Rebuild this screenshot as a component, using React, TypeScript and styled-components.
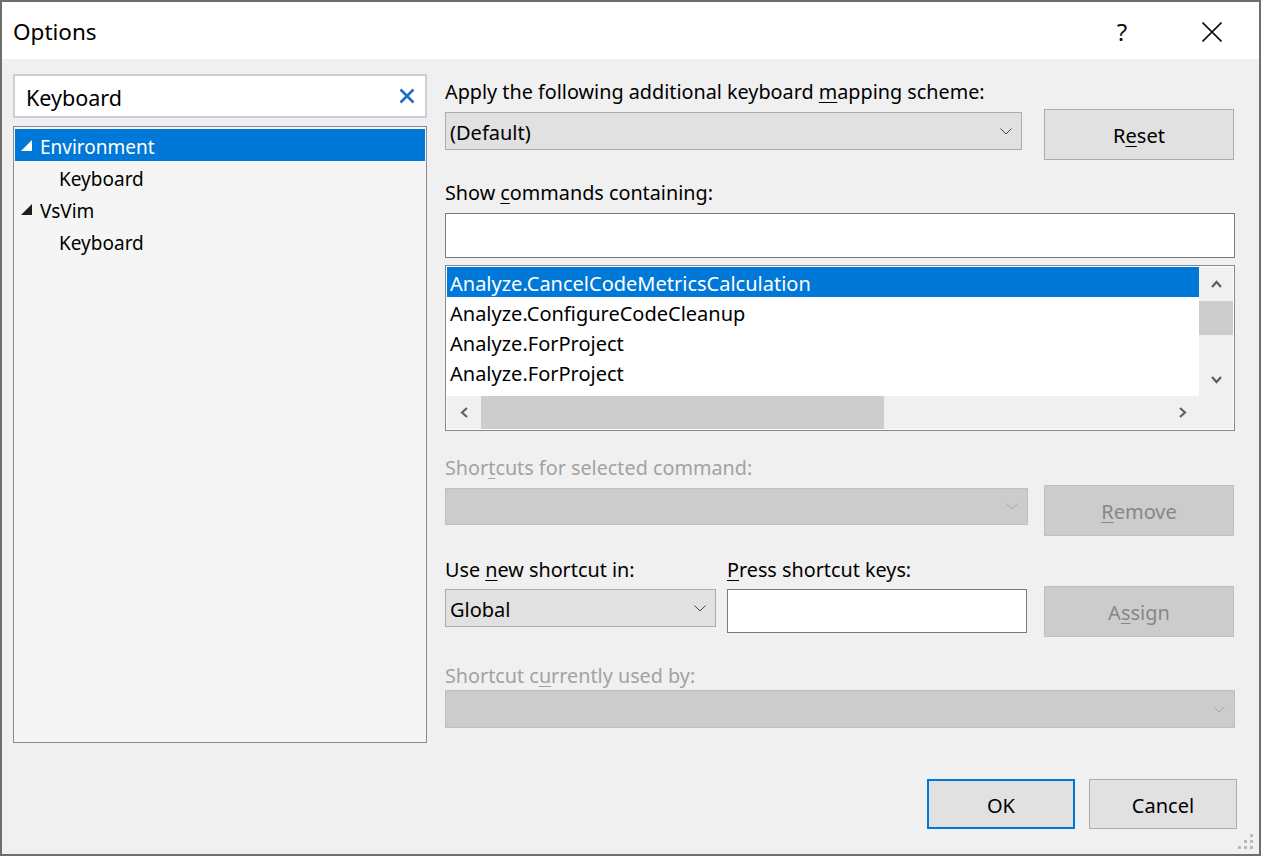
import React from "react";
import styled, { createGlobalStyle } from "styled-components";

const FONT = `"Noto Sans", "Open Sans", "DejaVu Sans", sans-serif`;

const Global = createGlobalStyle`
  html, body { margin: 0; padding: 0; background: #ffffff; }
  body { font-family: ${FONT}; }
  * { box-sizing: border-box; }
`;

const Window = styled.div`
  position: relative;
  width: 1261px;
  height: 856px;
  border: 2px solid #6e6e6e;
  background: #f0f0f0;
  display: flex;
  flex-direction: column;
  font-family: ${FONT};
  color: #000;
`;

const TitleBar = styled.div`
  height: 57px;
  flex: none;
  background: #ffffff;
  display: flex;
  align-items: center;
  padding: 2px 12px 0 11px;
`;

const Title = styled.div`
  font-size: 22.5px;
  line-height: 30px;
`;

const TitleButtons = styled.div`
  margin-left: auto;
  display: flex;
  gap: 20px;
  align-items: center;
`;

const TitleButton = styled.div`
  width: 70px;
  height: 40px;
  display: flex;
  align-items: center;
  justify-content: center;
  font-size: 24px;
  color: #111;
`;

const Content = styled.div`
  flex: 1;
  display: flex;
  flex-direction: column;
  padding: 15px 24px 25px 11px;
`;

const Main = styled.div`
  flex: 1;
  display: flex;
  gap: 18px;
  min-height: 0;
`;

const LeftCol = styled.div`
  width: 414px;
  flex: none;
  display: flex;
  flex-direction: column;
  gap: 8px;
`;

const SearchBox = styled.div`
  height: 44px;
  border: 2px solid #cdd0db;
  background: #ffffff;
  display: flex;
  align-items: center;
  padding: 0 10px 0 11px;
  font-size: 21.5px;
`;

const SearchText = styled.span`
  flex: 1;
  padding-top: 2px;
`;

const Tree = styled.div`
  flex: 1;
  border: 1px solid #8b8a9c;
  background: #f5f5f5;
  padding: 2px 1px;
`;

const TreeRow = styled.div<{ $level: number; $selected?: boolean }>`
  height: 32px;
  display: flex;
  align-items: center;
  font-size: 19px;
  padding-left: ${(p) => (p.$level === 0 ? 6 : 44)}px;
  gap: 8px;
  background: ${(p) => (p.$selected ? "#0078d7" : "transparent")};
  color: ${(p) => (p.$selected ? "#ffffff" : "#000000")};
`;

const TreeText = styled.span`
  padding-top: 3px;
`;

const RightCol = styled.div`
  flex: 1;
  display: flex;
  flex-direction: column;
`;

const Label = styled.div<{ $mt: number; $disabled?: boolean }>`
  margin-top: ${(p) => p.$mt}px;
  height: 26px;
  line-height: 26px;
  padding-top: 2px;
  font-size: 19.8px;
  white-space: nowrap;
  color: ${(p) => (p.$disabled ? "#a2a2a2" : "#000000")};
`;

const Key = styled.span`
  text-decoration: underline;
  text-decoration-thickness: 1px;
  text-underline-offset: 3px;
`;

const ControlRow = styled.div<{ $mt: number }>`
  margin-top: ${(p) => p.$mt}px;
  padding-right: 1px;
  display: flex;
  justify-content: space-between;
  align-items: flex-start;
`;

const Dropdown = styled.div<{ $w?: number; $h: number; $disabled?: boolean; $mt?: number }>`
  width: ${(p) => (p.$w ? `${p.$w}px` : "100%")};
  height: ${(p) => p.$h}px;
  margin-top: ${(p) => p.$mt ?? 0}px;
  background: ${(p) => (p.$disabled ? "#cccccc" : "#e1e1e1")};
  border: 1px solid ${(p) => (p.$disabled ? "#bfbfbf" : "#adadad")};
  display: flex;
  align-items: center;
  padding: 0 9px 0 4px;
  font-size: 20px;
  color: ${(p) => (p.$disabled ? "#8a8a8a" : "#000000")};
`;

const DropText = styled.span`
  flex: 1;
  padding-top: 2px;
`;

const Button = styled.div<{ $w: number; $h: number; $primary?: boolean; $disabled?: boolean }>`
  width: ${(p) => p.$w}px;
  height: ${(p) => p.$h}px;
  flex: none;
  display: flex;
  align-items: center;
  justify-content: center;
  padding-top: 2px;
  font-size: 20px;
  background: ${(p) => (p.$disabled ? "#cccccc" : "#e1e1e1")};
  border: ${(p) =>
    p.$primary ? "2px solid #0078d7" : p.$disabled ? "1px solid #bfbfbf" : "1px solid #adadad"};
  color: ${(p) => (p.$disabled ? "#878787" : "#000000")};
`;

const TextInput = styled.div<{ $h: number; $w?: number; $mt?: number }>`
  width: ${(p) => (p.$w ? `${p.$w}px` : "100%")};
  height: ${(p) => p.$h}px;
  margin-top: ${(p) => p.$mt ?? 0}px;
  background: #ffffff;
  border: 1px solid #7a7a7a;
`;

const ListBox = styled.div`
  margin-top: 7px;
  height: 166px;
  border: 1px solid #828790;
  padding: 1px;
  display: grid;
  grid-template-columns: 1fr 34px;
  grid-template-rows: 1fr 33px;
  background: #ffffff;
`;

const ListRows = styled.div`
  background: #ffffff;
  overflow: hidden;
`;

const ListRow = styled.div<{ $selected?: boolean }>`
  height: 30px;
  line-height: 30px;
  padding: 2px 0 0 3px;
  font-size: 20px;
  white-space: nowrap;
  background: ${(p) => (p.$selected ? "#0078d7" : "transparent")};
  color: ${(p) => (p.$selected ? "#ffffff" : "#000000")};
`;

const VScroll = styled.div`
  background: #f0f0f0;
  display: grid;
  grid-template-rows: 34px 34px 1fr 34px;
`;

const HScroll = styled.div`
  background: #f0f0f0;
  display: grid;
  grid-template-columns: 34px 403px 1fr 34px;
`;

const ScrollBtn = styled.div`
  display: flex;
  align-items: center;
  justify-content: center;
`;

const Thumb = styled.div`
  background: #cdcdcd;
`;

const Corner = styled.div`
  background: #f0f0f0;
`;

const ShortcutGrid = styled.div`
  margin-top: 19px;
  display: grid;
  grid-template-columns: 271px 300px 1fr;
  grid-template-rows: 26px 51px;
  column-gap: 11px;
  row-gap: 5px;
  align-items: start;
`;

const GridLabel = styled.div`
  line-height: 26px;
  padding-top: 2px;
  font-size: 19.8px;
  white-space: nowrap;
`;

const AssignCell = styled.div`
  grid-column: 3;
  grid-row: 2;
  justify-self: end;
  margin-right: 1px;
`;

const Footer = styled.div`
  margin-top: 36px;
  margin-right: -2px;
  display: flex;
  justify-content: flex-end;
  gap: 14px;
`;

const Grip = styled.svg`
  position: absolute;
  right: 6px;
  bottom: 5px;
`;

const Chevron = ({ disabled }: { disabled?: boolean }) => (
  <svg width="12" height="7" viewBox="0 0 12 7">
    <polyline
      points="0.5,0.5 6,6 11.5,0.5"
      fill="none"
      stroke={disabled ? "#a9a9a9" : "#444"}
      strokeWidth="1"
    />
  </svg>
);

const Arrow = ({ dir }: { dir: "up" | "down" | "left" | "right" }) => {
  const pts: Record<string, string> = {
    up: "1,8 5.5,3 10,8",
    down: "1,3 5.5,8 10,3",
    left: "8,1 3,5.5 8,10",
    right: "3,1 8,5.5 3,10",
  };
  return (
    <svg width="11" height="11" viewBox="0 0 11 11">
      <polyline points={pts[dir]} fill="none" stroke="#606060" strokeWidth="2.2" />
    </svg>
  );
};

const Expander = ({ color }: { color: string }) => (
  <svg width="11" height="11" viewBox="0 0 11 11">
    <polygon points="11,0 11,11 0,11" fill={color} />
  </svg>
);

export default function App() {
  return (
    <>
      <Global />
      <Window>
        <TitleBar>
          <Title>Options</Title>
          <TitleButtons>
            <TitleButton>?</TitleButton>
            <TitleButton>
              <svg width="20" height="20" viewBox="0 0 20 20">
                <path d="M0.5 0.5 L19.5 19.5 M19.5 0.5 L0.5 19.5" stroke="#111" strokeWidth="1.6" />
              </svg>
            </TitleButton>
          </TitleButtons>
        </TitleBar>
        <Content>
          <Main>
            <LeftCol>
              <SearchBox>
                <SearchText>Keyboard</SearchText>
                <svg width="16" height="16" viewBox="0 0 16 16">
                  <path d="M1.5 1.5 L14.5 14.5 M14.5 1.5 L1.5 14.5" stroke="#1d6fc2" strokeWidth="2.6" />
                </svg>
              </SearchBox>
              <Tree>
                <TreeRow $level={0} $selected>
                  <Expander color="#ffffff" />
                  <TreeText>Environment</TreeText>
                </TreeRow>
                <TreeRow $level={1}>
                  <TreeText>Keyboard</TreeText>
                </TreeRow>
                <TreeRow $level={0}>
                  <Expander color="#1e1e1e" />
                  <TreeText>VsVim</TreeText>
                </TreeRow>
                <TreeRow $level={1}>
                  <TreeText>Keyboard</TreeText>
                </TreeRow>
              </Tree>
            </LeftCol>
            <RightCol>
              <Label $mt={3}>
                Apply the following additional keyboard <Key>m</Key>apping scheme:
              </Label>
              <ControlRow $mt={6}>
                <Dropdown $w={577} $h={38} $mt={3}>
                  <DropText>(Default)</DropText>
                  <Chevron />
                </Dropdown>
                <Button $w={190} $h={51}>
                  R<Key>e</Key>set
                </Button>
              </ControlRow>
              <Label $mt={18}>
                Show <Key>c</Key>ommands containing:
              </Label>
              <TextInput $h={45} $mt={9} />
              <ListBox>
                <ListRows>
                  <ListRow $selected>Analyze.CancelCodeMetricsCalculation</ListRow>
                  <ListRow>Analyze.ConfigureCodeCleanup</ListRow>
                  <ListRow>Analyze.ForProject</ListRow>
                  <ListRow>Analyze.ForProject</ListRow>
                </ListRows>
                <VScroll>
                  <ScrollBtn>
                    <Arrow dir="up" />
                  </ScrollBtn>
                  <Thumb />
                  <div />
                  <ScrollBtn>
                    <Arrow dir="down" />
                  </ScrollBtn>
                </VScroll>
                <HScroll>
                  <ScrollBtn>
                    <Arrow dir="left" />
                  </ScrollBtn>
                  <Thumb />
                  <div />
                  <ScrollBtn>
                    <Arrow dir="right" />
                  </ScrollBtn>
                </HScroll>
                <Corner />
              </ListBox>
              <Label $mt={22} $disabled>
                Shor<Key>t</Key>cuts for selected command:
              </Label>
              <ControlRow $mt={6}>
                <Dropdown $w={583} $h={37} $mt={3} $disabled>
                  <DropText />
                  <Chevron disabled />
                </Dropdown>
                <Button $w={190} $h={51} $disabled>
                  <Key>R</Key>emove
                </Button>
              </ControlRow>
              <ShortcutGrid>
                <GridLabel>
                  Use <Key>n</Key>ew shortcut in:
                </GridLabel>
                <GridLabel>
                  <Key>P</Key>ress shortcut keys:
                </GridLabel>
                <div />
                <Dropdown $h={38} $mt={3}>
                  <DropText>Global</DropText>
                  <Chevron />
                </Dropdown>
                <TextInput $h={44} $mt={3} />
                <AssignCell>
                  <Button $w={190} $h={51} $disabled>
                    A<Key>s</Key>sign
                  </Button>
                </AssignCell>
              </ShortcutGrid>
              <Label $mt={24} $disabled>
                Shortcut c<Key>u</Key>rrently used by:
              </Label>
              <Dropdown $h={38} $mt={3} $disabled>
                <DropText />
                <Chevron disabled />
              </Dropdown>
            </RightCol>
          </Main>
          <Footer>
            <Button $w={148} $h={50} $primary>
              OK
            </Button>
            <Button $w={148} $h={50}>
              Cancel
            </Button>
          </Footer>
        </Content>
        <Grip width="15" height="15" viewBox="0 0 15 15">
          <rect x="12" y="0" width="3" height="3" fill="#b9b9b9" />
          <rect x="6" y="6" width="3" height="3" fill="#b9b9b9" />
          <rect x="12" y="6" width="3" height="3" fill="#b9b9b9" />
          <rect x="0" y="12" width="3" height="3" fill="#b9b9b9" />
          <rect x="6" y="12" width="3" height="3" fill="#b9b9b9" />
          <rect x="12" y="12" width="3" height="3" fill="#b9b9b9" />
        </Grip>
      </Window>
    </>
  );
}
